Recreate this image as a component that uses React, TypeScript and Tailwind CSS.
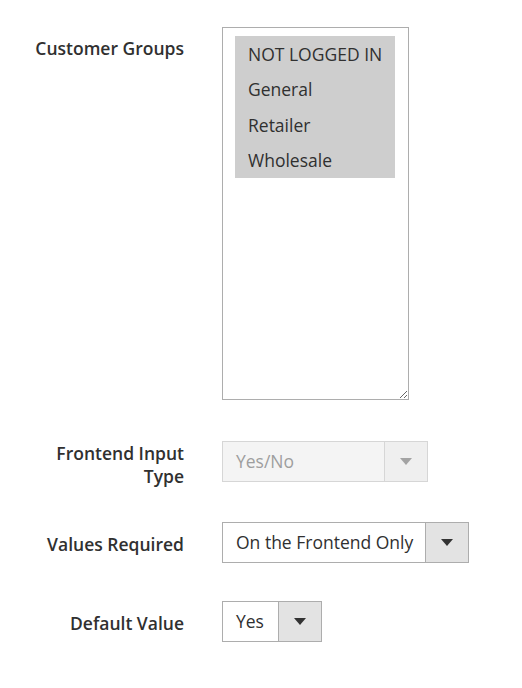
import React from 'react';

const font = { fontFamily: '"Open Sans", "Liberation Sans", sans-serif' };

function Caret({ disabled }: { disabled?: boolean }) {
  return (
    <svg width="12" height="7" viewBox="0 0 12 7" className="block">
      <path d="M0 0 L12 0 L6 7 Z" fill={disabled ? '#a3a3a3' : '#333333'} />
    </svg>
  );
}

function Select({ value, width, disabled }: { value: string; width: string; disabled?: boolean }) {
  return (
    <div
      className={`flex h-[41px] border ${width} ${
        disabled ? 'border-[#d6d6d6] bg-[#f4f4f4]' : 'border-[#adadad] bg-white'
      }`}
    >
      <div
        className={`flex-1 pl-[13px] flex items-center text-[17.5px] whitespace-nowrap ${
          disabled ? 'text-[#9e9e9e]' : 'text-[#303030]'
        }`}
      >
        {value}
      </div>
      <div
        className={`w-[43px] flex items-center justify-center border-l ${
          disabled ? 'border-[#d6d6d6] bg-[#efefef]' : 'border-[#adadad] bg-[#e3e3e3]'
        }`}
      >
        <Caret disabled={disabled} />
      </div>
    </div>
  );
}

export default function App() {
  const groups = ['NOT LOGGED IN', 'General', 'Retailer', 'Wholesale'];

  return (
    <div className="w-[522px] h-[688px] bg-white pt-[27px]" style={font}>
      <div className="flex items-start">
        <label className="w-[184px] text-right pt-[10px] text-[17.5px] leading-[23px] font-semibold text-[#303030]">
          Customer Groups
        </label>
        <div className="ml-[38px] w-[187px] h-[373px] border border-[#adadad] bg-white pl-[12px] pr-[13px] pt-[8px] resize overflow-auto">
          {groups.map((g) => (
            <div
              key={g}
              className="h-[35.5px] bg-[#cecece] pl-[13px] flex items-center text-[17.5px] text-[#303030] whitespace-nowrap"
            >
              {g}
            </div>
          ))}
        </div>
      </div>

      <div className="flex items-start mt-[41px]">
        <label className="w-[184px] text-right pt-[1px] text-[17.5px] leading-[23px] font-semibold text-[#303030]">
          Frontend Input
          <br />
          Type
        </label>
        <div className="ml-[38px]">
          <Select value="Yes/No" width="w-[206px]" disabled />
        </div>
      </div>

      <div className="flex items-start mt-[34px]">
        <label className="w-[184px] text-right pt-[11px] text-[17.5px] leading-[23px] font-semibold text-[#303030]">
          Values Required
        </label>
        <div className="ml-[38px]">
          <Select value="On the Frontend Only" width="w-[247px]" />
        </div>
      </div>

      <div className="flex items-start mt-[38px]">
        <label className="w-[184px] text-right pt-[11px] text-[17.5px] leading-[23px] font-semibold text-[#303030]">
          Default Value
        </label>
        <div className="ml-[38px]">
          <Select value="Yes" width="w-[100px]" />
        </div>
      </div>
    </div>
  );
}
